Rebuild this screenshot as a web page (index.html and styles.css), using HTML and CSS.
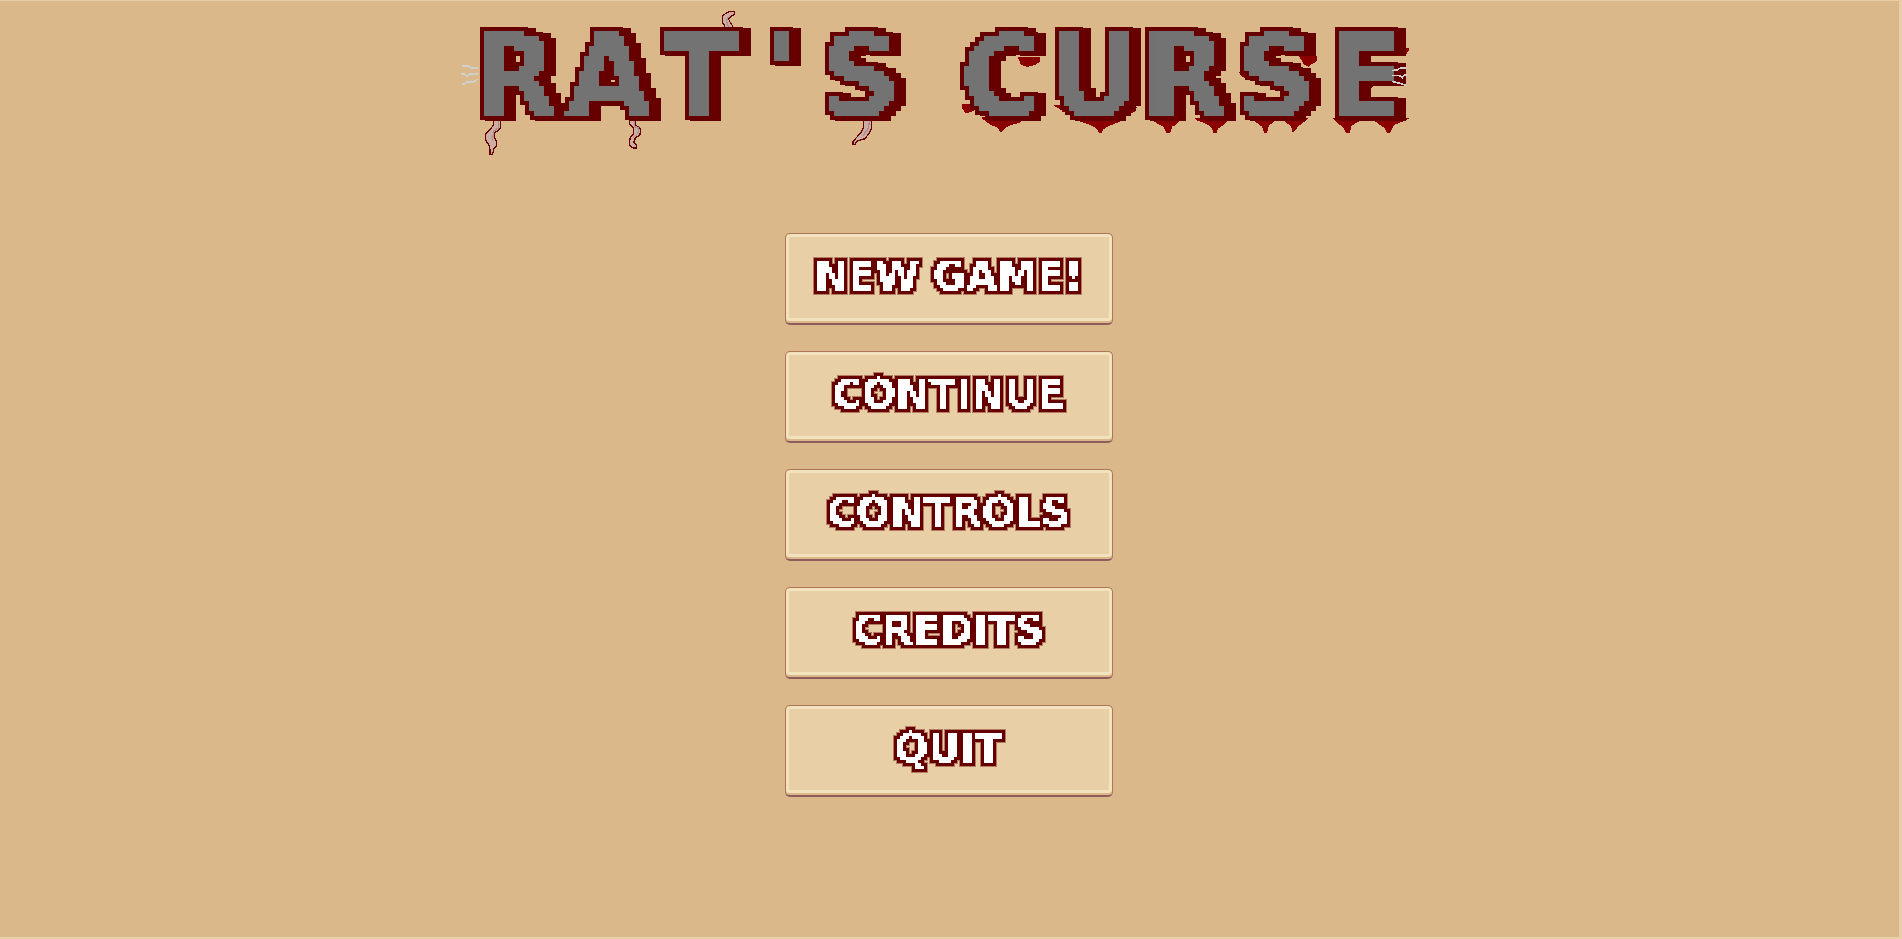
FILE: index.html
```html
<!DOCTYPE html>
<html lang="en">
<head>
<meta charset="utf-8">
<title>Rat's Curse</title>
<link rel="stylesheet" href="styles.css">
</head>
<body>
<main class="screen">
  <h1 class="logo">
    <svg class="logo-art" viewBox="0 0 1000 150">
      <defs>
        <!-- blocky lettering: sample on a coarse grid, outline, then extrude to the right -->
        <filter id="logo-pixels" filterUnits="userSpaceOnUse" x="0" y="0" width="1000" height="150" color-interpolation-filters="sRGB">
          <feFlood x="2" y="2" width="1" height="1" flood-color="#000" result="dot"/>
          <feOffset in="dot" dx="0" dy="0" x="0" y="0" width="5" height="5"/>
          <feTile result="grid"/>
          <feComposite in="SourceGraphic" in2="grid" operator="in"/>
          <feComponentTransfer><feFuncA type="discrete" tableValues="0 1"/></feComponentTransfer>
          <feMorphology operator="dilate" radius="2" result="face"/>
          <feMorphology in="face" operator="dilate" radius="4" result="ring"/>
          <feOffset in="ring" dx="5" dy="1" result="side1"/>
          <feOffset in="ring" dx="8" dy="1" result="side2"/>
          <feMerge result="body"><feMergeNode in="ring"/><feMergeNode in="side1"/><feMergeNode in="side2"/></feMerge>
          <feFlood flood-color="#660000"/>
          <feComposite in2="body" operator="in" result="dark"/>
          <feMerge><feMergeNode in="dark"/><feMergeNode in="face"/></feMerge>
        </filter>
        <filter id="label-pixels" filterUnits="userSpaceOnUse" x="-9" y="-9" width="300" height="66" color-interpolation-filters="sRGB">
          <feFlood x="1" y="1" width="1" height="1" flood-color="#000" result="dot"/>
          <feOffset in="dot" dx="0" dy="0" x="0" y="0" width="3" height="3"/>
          <feTile result="grid"/>
          <feComposite in="SourceGraphic" in2="grid" operator="in"/>
          <feComponentTransfer><feFuncA type="discrete" tableValues="0 1"/></feComponentTransfer>
          <feMorphology operator="dilate" radius="1" result="face"/>
          <feMorphology in="face" operator="dilate" radius="3" result="ring"/>
          <feMorphology in="face" operator="dilate" radius="4" result="halo"/>
          <feFlood flood-color="#660000" flood-opacity=".4"/>
          <feComposite in2="halo" operator="in" result="soft"/>
          <feFlood flood-color="#660000"/>
          <feComposite in2="ring" operator="in" result="dark"/>
          <feMerge><feMergeNode in="soft"/><feMergeNode in="dark"/><feMergeNode in="face"/></feMerge>
        </filter>
      </defs>
      <!-- tails -->
      <g transform="scale(.33333)" class="tail">
        <path d="M133 350V373L121 388 110 400V418L119 430 123 445V460H131L134 445 142 436V421L137 409V394L149 388 154 382V350Z"/>
        <path d="M542 350V369L554 382V397L545 408 542 418V432L552 441H563V432L554 424 560 409 572 403 575 391 572 379 560 373V350Z"/>
        <path d="M827 88V72L821 66V45L833 35 845 31H857V41L845 46 839 55 845 67 850 73V88Z"/>
        <path d="M1244 350V379L1236 395 1223 409 1212 421V430H1218L1225 420 1248 413 1260 397 1267 383V350Z"/>
      </g>
      <g transform="scale(.33333)" class="tail-shade">
        <path d="M148 354v27l-14 9-4 30M556 357v18l14 10-4 12-14 14M838 48l-6 12 10 24M1262 356l-4 26-16 22"/>
      </g>
      <!-- blood -->
      <g transform="translate(480 0) scale(.33333)" class="blood">
        <path d="M98 310h36v20l-14 5h-12l-8-12zM310 318h28l-4 16h-14zM160 348h140l-30 18-22 6-18 8-10 12h-8l-6-12-20-8-26-18zM266 168h68v14l-16 10-24 6-18-6z"/>
        <path d="M374 312h36v22h-8l-8-10-16-8zM590 318h34l-4 12-12 6-14-4zM440 350h148l-20 14-26 10-18 10-6 12h-8l-8-14-22-12-26-8z"/>
        <path d="M660 350h104l-16 14-10 10h-8l-6 22h-12l-8-18-18-10-18-12zM796 350h100v10l-16 14-12 8-6 14h-8l-8-18-20-12-24-8zM764 147h24l-6 6-4 6h-6zM866 255h22l-6 10-6 7-4-12z"/>
        <path d="M930 212h34l-8 14-8 7-14-12zM1110 166h54v14l-16 10-8 8-14-6zM966 350h84l-16 12-14 12-6 22h-8l-6-18-16-12-16-12zM1054 350h86l-14 12-18 14-12 16h-6l-4-16-16-12z"/>
        <path d="M1396 140h46l-2 7-10 16h-8l-12-10zM1316 252h18l-6 8-8 10zM1210 350h98l-20 12-20 12-6 22h-10l-10-18-20-14zM1324 350h122l-26 12-24 10-14 24h-8l-6-14-26-18z"/>
      </g>
      <text class="logo-text" y="114" x="23 116 212 315 371 453 511 600 692 786 879">RAT'S CURSE</text>
      <!-- whiskers -->
      <g transform="scale(.33333)" class="whisker">
        <path d="M38 196h20l14 6h14M36 220h10l8 6 8-6h24M38 249h8l8-6h18l14-8"/>
        <path d="M2828 209l18-3 8-5h17M2828 224h24l8 6 6-8h8M2828 241l20 5 22 6"/>
      </g>
    </svg>
  </h1>
  <nav class="menu" aria-label="Main menu">
    <button class="menu-button" type="button"><span class="label">NEW GAME!</span></button>
    <button class="menu-button" type="button"><span class="label">CONTINUE</span></button>
    <button class="menu-button" type="button"><span class="label">CONTROLS</span></button>
    <button class="menu-button" type="button"><span class="label">CREDITS</span></button>
    <button class="menu-button" type="button"><span class="label">QUIT</span></button>
  </nav>
</main>
</body>
</html>
```
FILE: styles.css
```css
* { box-sizing: border-box; }

body { margin: 0; background: #dbb88a; font-family: "DejaVu Sans", sans-serif; }

.screen {
  min-height: 100vh;
  display: flex;
  flex-direction: column;
  align-items: center;
  padding-right: 2px;
  border: solid #e8cfa5;
  border-width: 1px 3px 2px 0;
}

.logo { width: 1000px; max-width: 100%; margin: 0; }

.logo-art { display: block; width: 100%; height: auto; overflow: visible; }

.logo-text {
  font-family: "DejaVu Sans", sans-serif;
  font-size: 112px;
  font-weight: 700;
  fill: #737373;
  filter: url(#logo-pixels);
}

.whisker { fill: none; stroke: #d0d0d0; stroke-width: 5px; shape-rendering: crispEdges; }
.tail { fill: #cdada3; stroke: #660000; stroke-width: 4px; shape-rendering: crispEdges; }
.tail-shade { fill: none; stroke: #a98f87; stroke-width: 4px; shape-rendering: crispEdges; }
.blood { fill: #8b0000; shape-rendering: crispEdges; }

.menu { display: grid; gap: 26px; margin: 82px 0 24px; width: 328px; }

.menu-button {
  height: 92px;
  padding: 0 0 6px;
  border: 1px solid #ad7757;
  border-bottom: 2px solid #8f5c5c;
  border-radius: 5px;
  background: #e8cfa5;
  box-shadow: inset 0 -2px #dbb88a, inset 0 -5px #f2e2bd, inset 0 0 0 3px #f2e2bd;
  color: #fff;
  font-family: inherit;
  font-size: 40px;
  line-height: 48px;
  font-weight: 700;
  white-space: nowrap;
  cursor: pointer;
}

.label { display: inline-block; filter: url(#label-pixels); }

.menu-button:focus-visible { outline: 2px solid #660000; outline-offset: 3px; }
```
